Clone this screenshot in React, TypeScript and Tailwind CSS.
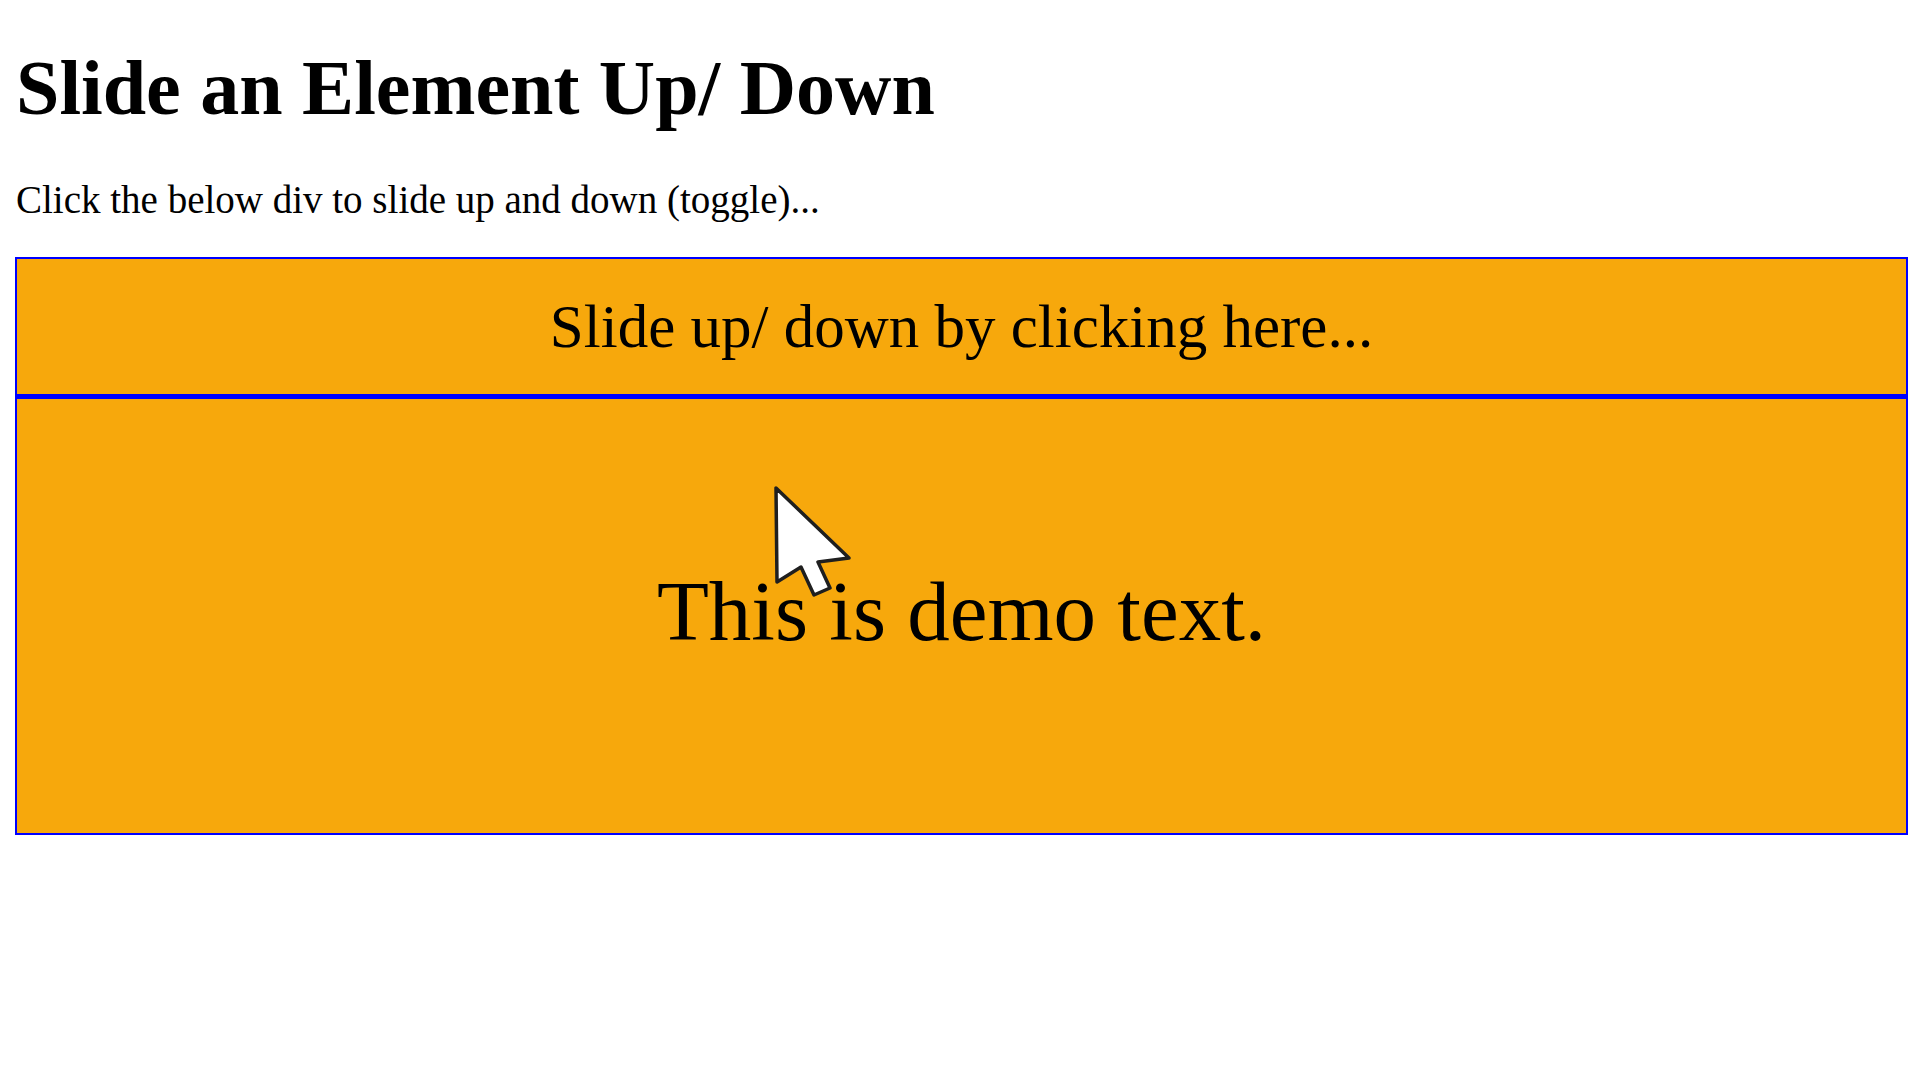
import React from "react";

const serif = { fontFamily: '"Liberation Serif", "Times New Roman", serif' };

function Pointer() {
  return (
    <svg
      width="84"
      height="118"
      viewBox="0 0 84 118"
      className="absolute left-[773px] top-[485px] pointer-events-none"
    >
      <path
        d="M3 3 L4 97 L28 82 L41 110 L57 103 L45 77 L76 73 Z"
        fill="#ffffff"
        stroke="#1f1f1f"
        strokeWidth="3.5"
        strokeLinejoin="round"
      />
    </svg>
  );
}

export default function App() {
  return (
    <div className="relative flow-root min-h-[1080px] bg-white px-[15px] text-black" style={serif}>
      <h1 className="mt-[43px] text-[78px] font-bold leading-[90px] pl-[1px]">Slide an Element Up/ Down</h1>
      <p className="mt-[44px] text-[39px] leading-[45px] pl-[1px]">
        Click the below div to slide up and down (toggle)...
      </p>
      <div className="mt-[35px] w-[1893px]">
        <div className="box-border flex h-[140px] items-center justify-center border-[2px] border-b-[3px] border-[#0000ff] bg-[#f7a80c]">
          <span className="text-[61px] leading-[70px]">Slide up/ down by clicking here...</span>
        </div>
        <div className="box-border flex h-[438px] items-center justify-center border-[2px] border-t-[2px] border-[#0000ff] bg-[#f7a80c] pb-[10px]">
          <span className="text-[85px] leading-[98px]">This is demo text.</span>
        </div>
      </div>
      <Pointer />
    </div>
  );
}
